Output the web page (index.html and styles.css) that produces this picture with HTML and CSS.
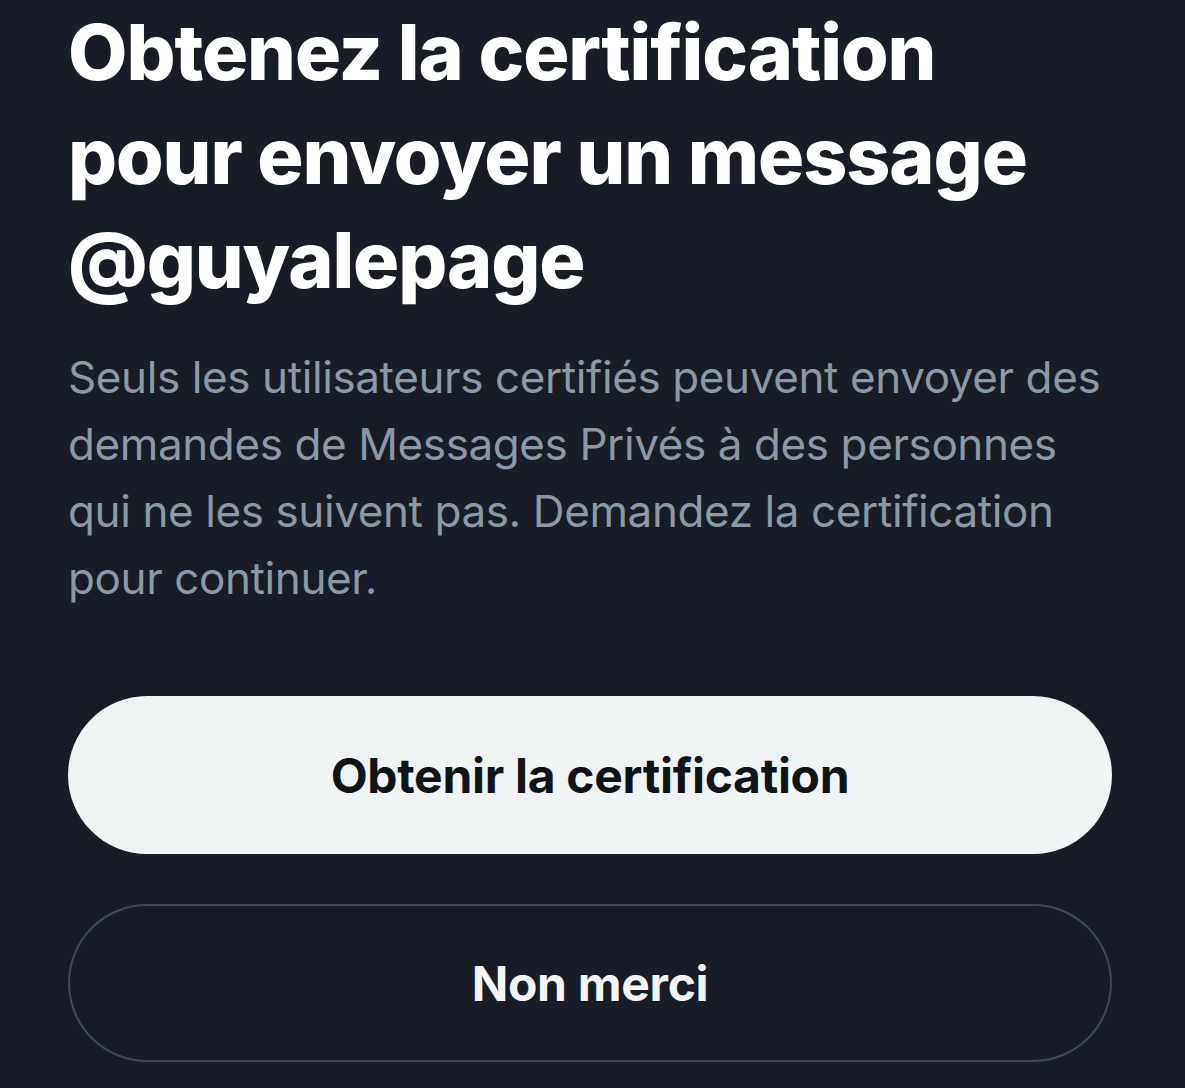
FILE: index.html
```html
<!DOCTYPE html>
<html lang="fr">
<head>
<meta charset="utf-8">
<link rel="stylesheet" href="styles.css">
<title>Obtenez la certification</title>
</head>
<body>
<main class="sheet">
  <h1 class="title">Obtenez la certification<br>pour envoyer un message<br>@guyalepage</h1>
  <p class="desc">Seuls les utilisateurs certifiés peuvent envoyer des demandes de Messages Privés à des personnes qui ne les suivent pas. Demandez la certification pour continuer.</p>
  <div class="actions">
    <button class="btn btn-primary">Obtenir la certification</button>
    <button class="btn btn-outline">Non merci</button>
  </div>
</main>
</body>
</html>
```

FILE: styles.css
```css
html, body {
  margin: 0;
  padding: 0;
  background: #171c26;
  height: 100%;
  overflow: hidden;
}
.sheet {
  box-sizing: border-box;
  width: 1185px;
  height: 1088px;
  padding: 0 70px 0 68px;
  font-family: Inter, "Noto Sans", sans-serif;
}
.title {
  margin: 0;
  font-size: 77px;
  line-height: 104px;
  font-weight: 800;
  color: #ffffff;
  letter-spacing: -1.1px;
  white-space: nowrap;
}
.desc {
  margin: 32px 0 0;
  font-size: 44px;
  line-height: 67px;
  color: #8b98a5;
  font-weight: 400;
  letter-spacing: -0.4px;
  margin-right: -4px;
}
.actions {
  display: flex;
  flex-direction: column;
  gap: 50px;
  margin-top: 84px;
  margin-right: 3px;
}
.btn {
  box-sizing: border-box;
  width: 100%;
  height: 158px;
  border-radius: 79px;
  font-family: Inter, "Noto Sans", sans-serif;
  font-size: 48px;
  font-weight: 700;
  letter-spacing: -0.3px;
  cursor: pointer;
}
.btn-primary {
  background: #eff3f4;
  color: #0f1419;
  border: none;
}
.btn-outline {
  background: transparent;
  color: #f2f4f5;
  border: 2px solid #3e4a56;
}
```
